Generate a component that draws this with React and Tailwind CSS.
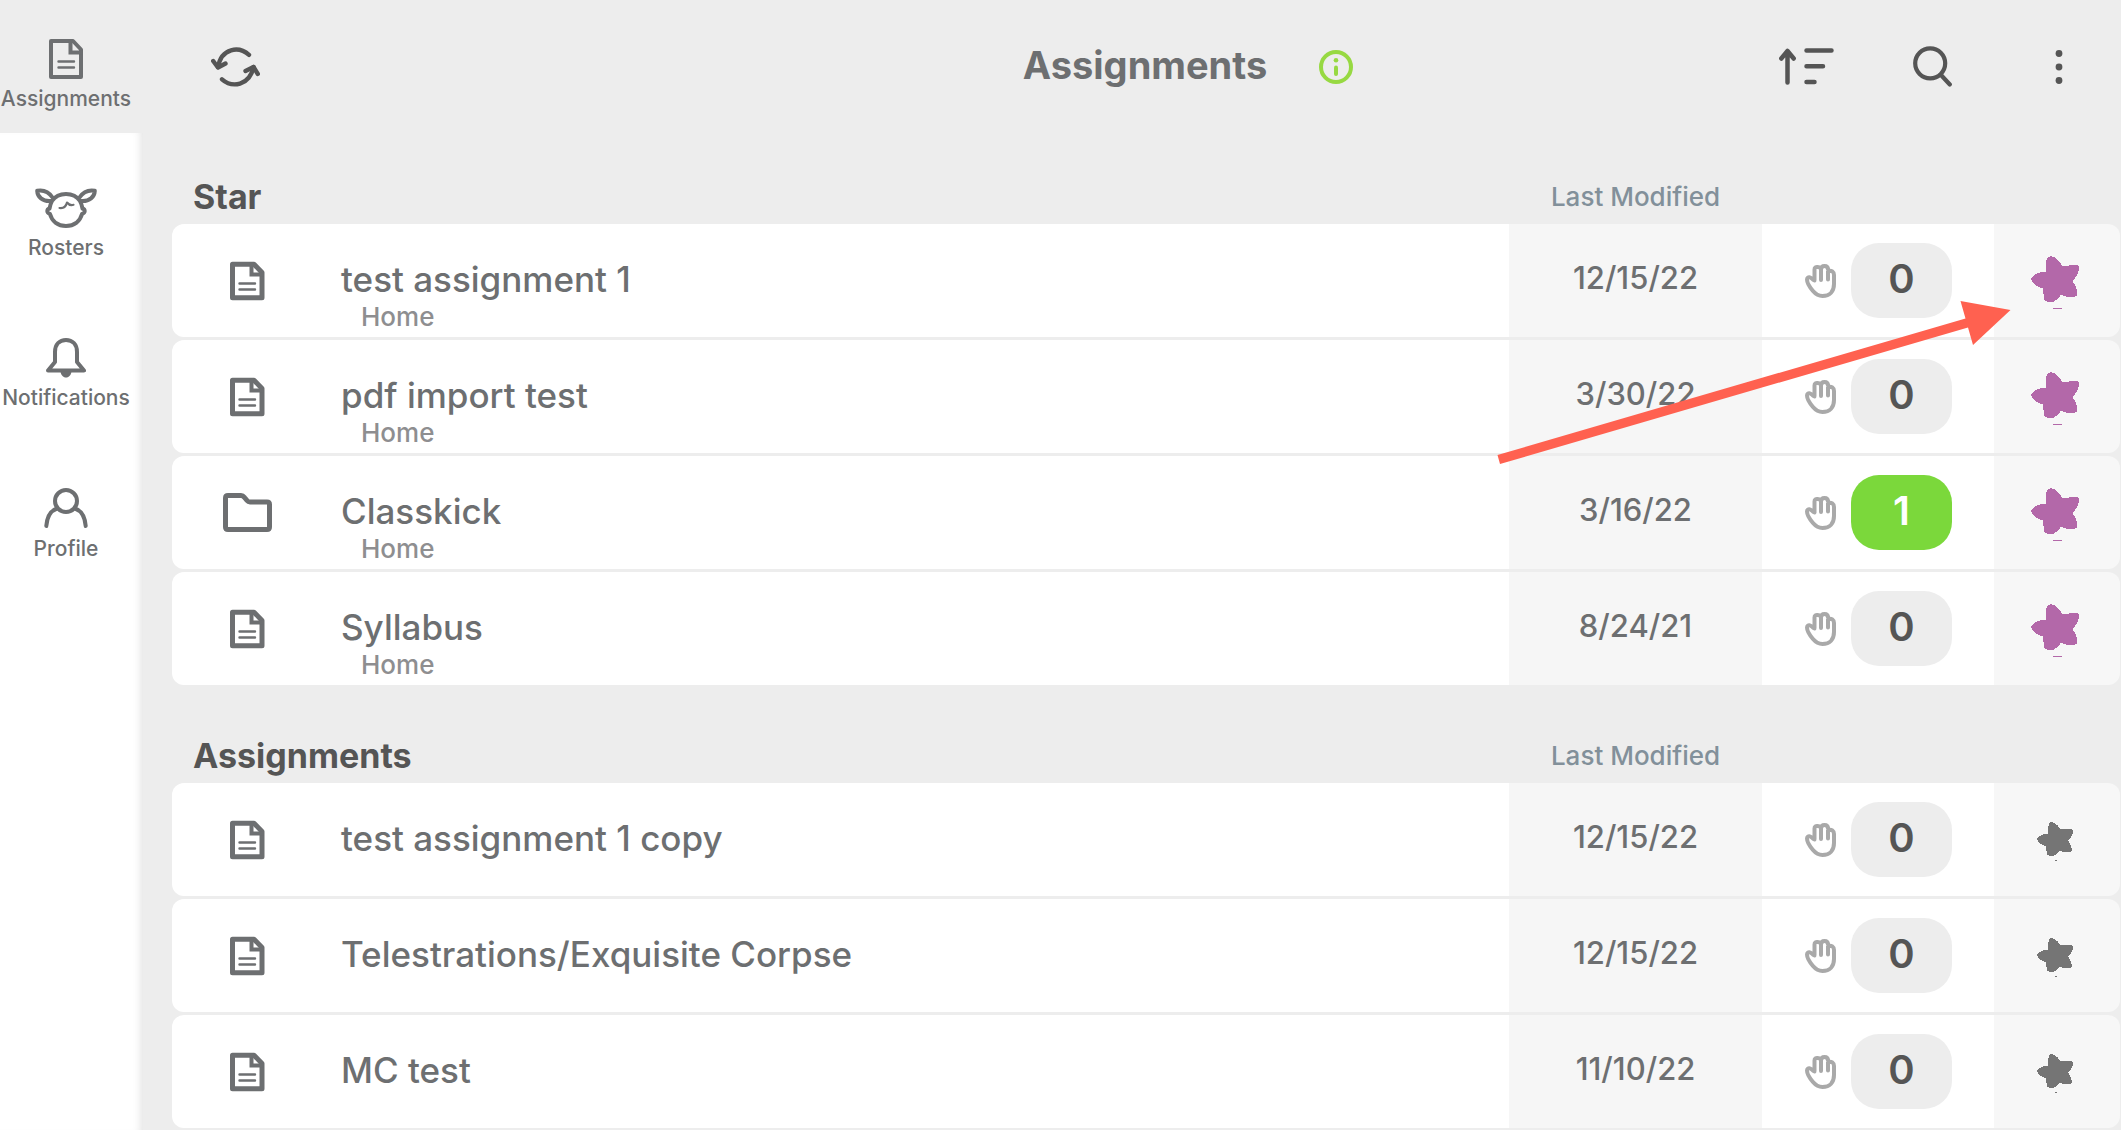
import React, { useState } from 'react';

const starred = [
    { id: 1, name: 'test assignment 1', folder: 'Home', type: 'doc', modified: '12/15/22', hands: 0 },
    { id: 2, name: 'pdf import test', folder: 'Home', type: 'doc', modified: '3/30/22', hands: 0 },
    { id: 3, name: 'Classkick', folder: 'Home', type: 'folder', modified: '3/16/22', hands: 1 },
    { id: 4, name: 'Syllabus', folder: 'Home', type: 'doc', modified: '8/24/21', hands: 0 },
];

const assignments = [
    { id: 5, name: 'test assignment 1 copy', type: 'doc', modified: '12/15/22', hands: 0 },
    { id: 6, name: 'Telestrations/Exquisite Corpse', type: 'doc', modified: '12/15/22', hands: 0 },
    { id: 7, name: 'MC test', type: 'doc', modified: '11/10/22', hands: 0 },
];

const DocIcon = ({ bold }) => (
    <svg width="35" height="40" viewBox="0 0 35 40" fill="none" stroke="currentColor" strokeLinejoin="round" strokeLinecap="round" aria-hidden="true">
        <path d={bold ? 'M2.5 3.2H24L32 11.5V36.8H2.5Z' : 'M2 2H24L32 10.5V38H2Z'} strokeWidth={bold ? 5 : 4} />
        <path d="M21.5 3V13.5H32" strokeWidth="4" strokeLinejoin="miter" />
        <path d="M9.5 22.5H25M9.5 28.5H25" strokeWidth="2.4" />
    </svg>
);

const FolderIcon = () => (
    <svg width="49" height="39" viewBox="0 0 49 39" fill="none" stroke="currentColor" strokeWidth="5" strokeLinejoin="round" aria-hidden="true">
        <path d="M5 2.5H18C19.5 2.5 20.5 3.2 21.5 4.5L24 7.5C24.8 8.5 25.8 9 27 9H44C45.5 9 46.5 10 46.5 11.5V34C46.5 35.5 45.5 36.5 44 36.5H5C3.5 36.5 2.5 35.5 2.5 34V5C2.5 3.5 3.5 2.5 5 2.5Z" />
    </svg>
);

const GoatIcon = () => (
    <svg width="62" height="40" viewBox="0 0 62 40" fill="none" stroke="currentColor" strokeWidth="4" strokeLinejoin="round" strokeLinecap="round" aria-hidden="true">
        <path d="M17 13C20 8.5 25 6 31 6S42 8.5 45 13C46.5 15.5 47 18 47.5 20.5C50.5 21.5 50.5 25 47 26C45 33.5 39 38 31 38S17 33.5 15 26C11.5 25 11.5 21.5 14.5 20.5C15 18 15.5 15.5 17 13Z" />
        <path d="M17.5 9.5C13.5 3.5 8 1.8 2.2 2.8C2.5 9 7.5 13.5 15.5 13" />
        <path d="M44.5 9.5C48.5 3.5 54 1.8 59.8 2.8C59.5 9 54.5 13.5 46.5 13" />
        <path d="M24.5 20C28 20.5 31 18.5 32 14.5C33.5 16.5 36 17.5 38.5 16.8" strokeWidth="2.2" />
    </svg>
);

const BellIcon = () => (
    <svg width="40" height="40" viewBox="0 0 40 40" fill="none" stroke="currentColor" strokeWidth="4" strokeLinejoin="round" aria-hidden="true">
        <path d="M2 32.5L9 24V14C9 6.5 13.5 2 20 2S31 6.5 31 14V24L38 32.5Z" />
        <path d="M14.5 33.5C15 37 17 39.5 20 39.5S25 37 25.5 33.5Z" fill="currentColor" stroke="none" />
    </svg>
);

const ProfileIcon = () => (
    <svg width="44" height="41" viewBox="0 0 44 41" fill="none" stroke="currentColor" strokeWidth="4" strokeLinecap="round" aria-hidden="true">
        <circle cx="22" cy="13" r="11" />
        <path d="M2.3 38C3 29 7 22.5 13 20.5M41.7 38C41 29 37 22.5 31 20.5" />
    </svg>
);

const RefreshIcon = () => (
    <svg width="49" height="40" viewBox="0 0 49 40" fill="none" stroke="currentColor" strokeWidth="4.4" strokeLinejoin="round" strokeLinecap="round" aria-hidden="true">
        <path d="M38 7.8C28 -1 10.500 0.500 7 20" />
        <path d="M2.200 14L7 20.500L14.500 16.500" />
        <path d="M11 32.300C21 41 38.500 39 42.500 20" />
        <path d="M34.500 24L42.500 20L46.800 27" />
    </svg>
);

const SortIcon = () => (
    <svg width="55" height="37" viewBox="0 0 55 37" fill="none" stroke="currentColor" strokeWidth="4.5" strokeLinejoin="round" strokeLinecap="round" aria-hidden="true">
        <path d="M8.5 34.5V3M2.3 10.5L8.5 3L14.7 10.5M27.5 2.5H52.5M27.5 18.3H44M27.5 34H35.5" />
    </svg>
);

const SearchIcon = () => (
    <svg width="39" height="41" viewBox="0 0 39 41" fill="none" stroke="currentColor" strokeWidth="4.2" strokeLinecap="round" aria-hidden="true">
        <circle cx="17.2" cy="17.3" r="15" />
        <path d="M28 29L36.8 38.5" />
    </svg>
);

const MoreIcon = () => (
    <svg width="8" height="34" viewBox="0 0 8 34" fill="currentColor" aria-hidden="true">
        <circle cx="4" cy="3.5" r="3.4" />
        <circle cx="4" cy="17" r="3.4" />
        <circle cx="4" cy="30.5" r="3.4" />
    </svg>
);

const InfoIcon = () => (
    <svg width="34" height="34" viewBox="0 0 34 34" fill="none" stroke="currentColor" strokeWidth="4" strokeLinecap="round" aria-hidden="true">
        <circle cx="17" cy="17" r="15" />
        <circle cx="17" cy="10.3" r="2.3" fill="currentColor" stroke="none" />
        <path d="M17 17.5V24" />
    </svg>
);

const HandIcon = () => (
    <svg width="31" height="34" viewBox="0 0 31 34" fill="none" stroke="currentColor" strokeWidth="4" strokeLinejoin="round" strokeLinecap="round" aria-hidden="true">
        <path d="M9.5 16V5.5C9.5 3.5 11 2.8 12.500 3C14 3.2 16 3.8 16 5.5M16 16V5.5C16 3 17.5 2 19.5 2C21.5 2 23 3.2 23 5.5M23 15.5V7C26.5 6 29 7.8 29 11V20C29 27 25 32 17.5 32C13.5 32 10.5 30 8 27C5 23.5 2 19.5 2 15.5C2 13.5 3.5 13 4.5 13.2C6.5 13.5 7 15.5 9.5 16.5" />
    </svg>
);

const StarIcon = ({ active }) => (
    <svg
        width={active ? 48 : 36}
        height={active ? 54 : 40}
        viewBox="0 0 48 54"
        preserveAspectRatio="none"
        fill="currentColor"
        shapeRendering="crispEdges"
        aria-hidden="true"
    >
        <path d="M14.5 12Q14.500 5 16.500 1.500Q19 -0.500 23 1Q28 4 31 10Q38 9.500 44 9Q48.500 8.500 48 14Q46.500 20 41.500 25Q46 31 46.500 38Q45 42 39 41Q34 41 30 38.500Q26 45 20 46.500Q16 46.500 13.500 44Q12 39 12.500 32.500Q3 31 0 23Q4 16 14.500 15.500Z" />
        {active ? <path d="M22 52H31V53H22Z" /> : <path d="M24.5 51.5H26V53H24.5Z" />}
    </svg>
);

const navItems = [
    { label: 'Rosters', icon: <GoatIcon /> },
    { label: 'Notifications', icon: <BellIcon /> },
    { label: 'Profile', icon: <ProfileIcon /> },
];

const Sidebar = () => (
    <nav className="flex w-[143px] shrink-0 flex-col text-[21px] font-medium text-[#6d6f71]">
        <a href="#assignments" aria-current="page" className="flex h-[133px] w-[132px] flex-col items-center gap-2 pt-[39px]">
            <DocIcon />
            <span className="leading-6">Assignments</span>
        </a>
        <div className="flex-1 bg-white shadow-[inset_-8px_0_8px_-6px_rgba(0,0,0,0.12)]">
            {navItems.map(item => (
                <a key={item.label} href={`#${item.label.toLowerCase()}`} className="flex h-[150px] w-[132px] flex-col items-center gap-2 pt-[55px]">
                    {item.icon}
                    <span className="leading-6">{item.label}</span>
                </a>
            ))}
        </div>
    </nav>
);

const Header = () => (
    <header className="grid h-[133px] grid-cols-[1fr_auto_1fr] items-center pl-28 text-[#555]">
        <button type="button" aria-label="Refresh" className="-ml-11 justify-self-start">
            <RefreshIcon />
        </button>
        <div className="flex items-center gap-[52px]">
            <h1 className="pb-1 text-[38px] leading-10 font-bold text-[#6d6f71]">Assignments</h1>
            <button type="button" aria-label="About assignments" className="text-[#97d942]">
                <InfoIcon />
            </button>
        </div>
        <div className="flex items-center justify-end pr-[58px]">
            <button type="button" aria-label="Sort"><SortIcon /></button>
            <button type="button" aria-label="Search" className="ml-[79px]"><SearchIcon /></button>
            <button type="button" aria-label="More options" className="ml-[103px]"><MoreIcon /></button>
        </div>
    </header>
);

const AssignmentRow = ({ item, active, onToggle }) => (
    <tr className="h-[113px]">
        <td className="rounded-l-xl bg-white text-[#6d6f71]">
            <div className="flex justify-center">
                {item.type === 'folder' ? <FolderIcon /> : <DocIcon bold />}
            </div>
        </td>
        <td className="bg-white pt-[33px] pl-[18px] align-top font-medium">
            <a href={`#assignment-${item.id}`} className="block text-[35px] leading-[44px] text-[#6d6f71]">{item.name}</a>
            {item.folder && <p className="pl-5 text-[26px] leading-8 text-[#8e8e90]">{item.folder}</p>}
        </td>
        <td className="bg-[#f6f6f6] pb-1 text-center text-[31px] font-medium text-[#6d6f71]">{item.modified}</td>
        <td className="bg-white">
            <div className="flex items-center gap-[15px] pl-[43px] text-[#a9a9a9]">
                <HandIcon />
                <span className={`flex h-[75px] w-[101px] items-center justify-center rounded-[28px] pb-1 text-[40px] font-semibold ${item.hands > 0 ? 'bg-[#7bd83b] text-white' : 'bg-[#ededed] text-[#555]'}`}>
                    {item.hands}
                </span>
            </div>
        </td>
        <td className="rounded-r-xl bg-[#f7f7f7] pt-1 pr-1">
            <button
                type="button"
                aria-label={`Star ${item.name}`}
                aria-pressed={active}
                onClick={() => onToggle(item.id)}
                className={`mx-auto block ${active ? 'text-[#b368a9]' : 'text-[#757575]'}`}
            >
                <StarIcon active={active} />
            </button>
        </td>
    </tr>
);

const AssignmentSection = ({ title, items, stars, onToggle }) => (
    <table className="w-full table-fixed border-separate border-spacing-x-0 border-spacing-y-[3px]">
        <colgroup>
            <col className="w-[151px]" />
            <col />
            <col className="w-[253px]" />
            <col className="w-[232px]" />
            <col className="w-[126px]" />
        </colgroup>
        <thead>
            <tr className="h-[85px]">
                <th colSpan={2} className="pb-2 pl-[21px] text-left align-bottom text-[34px] leading-8 font-bold text-[#555]">{title}</th>
                <th className="pb-2 align-bottom text-[26px] leading-8 font-medium text-[#82909a]">Last Modified</th>
                <td colSpan={2} />
            </tr>
        </thead>
        <tbody>
            {items.map(item => (
                <AssignmentRow key={item.id} item={item} active={stars.includes(item.id)} onToggle={onToggle} />
            ))}
        </tbody>
    </table>
);

const CalloutArrow = () => (
    <svg width="514" height="164" viewBox="0 0 514 164" fill="#ff6150" className="pointer-events-none absolute top-[301px] right-[110px]" aria-hidden="true">
        <path d="M0.5 154L468.5 17.5L463.5 0L513.5 9L476 44L471 26.5L3 163Z" />
    </svg>
);

const App = () => {
    const [stars, setStars] = useState([1, 2, 3, 4]);

    const handleToggle = (id) => {
        setStars(prev => prev.includes(id) ? prev.filter(s => s !== id) : [...prev, id]);
    };

    return (
        <div className="relative flex min-h-screen bg-[#ededed] font-['Inter','Open_Sans',sans-serif]">
            <Sidebar />
            <div className="min-w-0 flex-1">
                <Header />
                <main className="flex flex-col gap-1 pr-px pl-[29px]">
                    <AssignmentSection title="Star" items={starred} stars={stars} onToggle={handleToggle} />
                    <AssignmentSection title="Assignments" items={assignments} stars={stars} onToggle={handleToggle} />
                </main>
            </div>
            <CalloutArrow />
        </div>
    );
};

export default App;
